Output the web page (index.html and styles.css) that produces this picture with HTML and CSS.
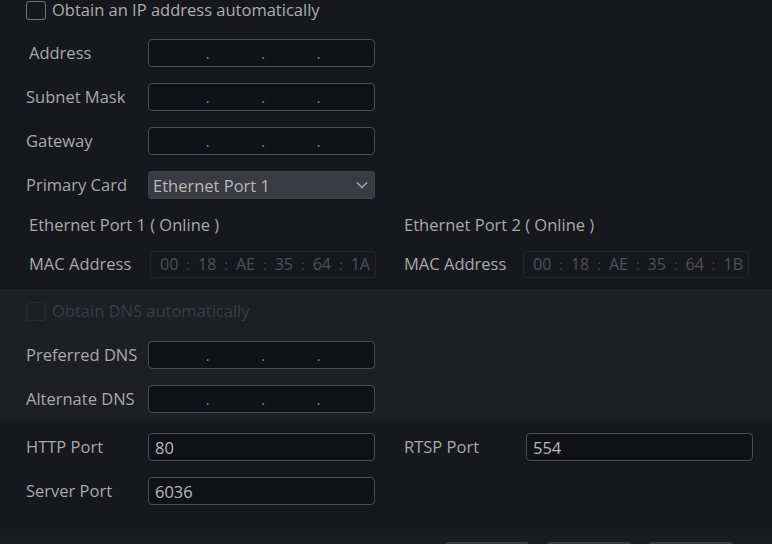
FILE: index.html
```html
<!DOCTYPE html>
<html>
<head>
<meta charset="utf-8">
<link rel="stylesheet" href="styles.css">
</head>
<body>
<div class="page">
  <section class="sec sec-ip">
    <div class="check-row">
      <span class="checkbox"></span>
      <span class="check-label">Obtain an IP address automatically</span>
    </div>
    <div class="row">
      <span class="label indent">Address</span>
      <div class="ipbox"><span></span><span class="dot">.</span><span></span><span class="dot">.</span><span></span><span class="dot">.</span><span></span></div>
    </div>
    <div class="row">
      <span class="label">Subnet Mask</span>
      <div class="ipbox"><span></span><span class="dot">.</span><span></span><span class="dot">.</span><span></span><span class="dot">.</span><span></span></div>
    </div>
    <div class="row">
      <span class="label">Gateway</span>
      <div class="ipbox"><span></span><span class="dot">.</span><span></span><span class="dot">.</span><span></span><span class="dot">.</span><span></span></div>
    </div>
    <div class="row">
      <span class="label">Primary Card</span>
      <div class="select">
        <span>Ethernet Port 1</span>
        <svg class="chev" width="12" height="8" viewBox="0 0 12 8"><polyline points="1,1.5 6,6.5 11,1.5" fill="none" stroke="#a8a8a8" stroke-width="1.5"/></svg>
      </div>
    </div>
    <div class="eth-row">
      <span class="eth-title indent">Ethernet Port 1 ( Online )</span>
      <span class="eth-title">Ethernet Port 2 ( Online )</span>
    </div>
    <div class="mac-row">
      <div class="mac-col">
        <span class="label indent mac-label">MAC Address</span>
        <div class="macbox"><span>00</span><i>:</i><span>18</span><i>:</i><span>AE</span><i>:</i><span>35</span><i>:</i><span>64</span><i>:</i><span>1A</span></div>
      </div>
      <div class="mac-col right">
        <span class="label mac-label">MAC Address</span>
        <div class="macbox"><span>00</span><i>:</i><span>18</span><i>:</i><span>AE</span><i>:</i><span>35</span><i>:</i><span>64</span><i>:</i><span>1B</span></div>
      </div>
    </div>
  </section>
  <section class="sec sec-dns">
    <div class="check-row">
      <span class="checkbox disabled"></span>
      <span class="check-label disabled">Obtain DNS automatically</span>
    </div>
    <div class="row">
      <span class="label">Preferred DNS</span>
      <div class="ipbox"><span></span><span class="dot">.</span><span></span><span class="dot">.</span><span></span><span class="dot">.</span><span></span></div>
    </div>
    <div class="row">
      <span class="label">Alternate DNS</span>
      <div class="ipbox"><span></span><span class="dot">.</span><span></span><span class="dot">.</span><span></span><span class="dot">.</span><span></span></div>
    </div>
  </section>
  <section class="sec sec-port">
    <div class="row two">
      <span class="label">HTTP Port</span>
      <div class="textbox">80</div>
      <span class="label right-label">RTSP Port</span>
      <div class="textbox">554</div>
    </div>
    <div class="row">
      <span class="label">Server Port</span>
      <div class="textbox">6036</div>
    </div>
  </section>
  <footer class="footer">
    <div class="btn"></div>
    <div class="btn"></div>
    <div class="btn"></div>
  </footer>
</div>
</body>
</html>
```

FILE: styles.css
```css
html, body {
  margin: 0;
  padding: 0;
  background: #17181c;
}
body {
  font-family: "Open Sans", "Noto Sans", sans-serif;
  font-size: 16.5px;
  color: #a9a9aa;
}
.page {
  width: 772px;
  height: 544px;
  overflow: hidden;
  background: #17181c;
}
.sec {
  display: flex;
  flex-direction: column;
  padding-left: 26px;
}
.sec-ip {
  height: 289px;
  box-sizing: border-box;
}
.sec-dns {
  background: #1e1f23;
  height: 132px;
  box-sizing: border-box;
  padding-top: 12px;
}
.sec-port {
  height: 114px;
  box-sizing: border-box;
  padding-top: 4px;
}
.check-row {
  display: flex;
  align-items: center;
  height: 20px;
  gap: 6px;
  margin-bottom: 12px;
}
.sec-ip .check-row {
  margin-bottom: 11px;
}
.checkbox {
  width: 20px;
  height: 19px;
  box-sizing: border-box;
  border: 1.5px solid #74767a;
  border-radius: 3px;
}
.checkbox.disabled {
  border: 1.5px dotted #35373b;
}
.check-label {
  color: #acacad;
  line-height: 20px;
}
.check-label.disabled {
  color: #3b3c40;
}
.row {
  display: flex;
  align-items: center;
  height: 44px;
}
.label {
  width: 122px;
  flex: none;
  white-space: nowrap;
  line-height: 20px;
}
.label.indent {
  padding-left: 3px;
  width: 119px;
}
.ipbox, .textbox, .select {
  width: 227px;
  height: 28px;
  box-sizing: border-box;
  border: 1.5px solid #4a4d52;
  border-radius: 4px;
  background: #111216;
  flex: none;
}
.ipbox {
  display: grid;
  grid-template-columns: 1fr 0 1fr 0 1fr 0 1fr;
  align-items: center;
  padding-left: 3px;
}
.ipbox .dot {
  display: flex;
  justify-content: center;
  font-size: 14px;
  color: #8a8b8e;
  line-height: 14px;
  position: relative;
  top: 1px;
}
.select {
  background: #393b40;
  border: 1px solid #3f4146;
  border-radius: 3px;
  display: flex;
  align-items: center;
  justify-content: space-between;
  padding: 0 6px 0 4px;
  color: #b9b9ba;
}
.chev {
  display: block;
}
.eth-row {
  display: flex;
  align-items: center;
  height: 34px;
}
.eth-title {
  width: 378px;
  flex: none;
  box-sizing: border-box;
}
.eth-title.indent {
  padding-left: 3px;
}
.mac-row {
  display: flex;
  align-items: center;
  height: 46px;
}
.mac-col {
  display: flex;
  align-items: center;
  width: 378px;
  flex: none;
}
.mac-col.right {
  width: auto;
}
.mac-col .mac-label {
  width: 121px;
}
.mac-col.right .mac-label {
  width: 119px;
}
.macbox {
  width: 226px;
  height: 27px;
  box-sizing: border-box;
  border: 1px dotted #2e3034;
  border-radius: 3px;
  display: flex;
  align-items: center;
  justify-content: space-between;
  padding: 0 5px 0 9px;
  color: #4e5055;
  font-size: 16px;
}
.macbox i {
  font-style: normal;
  font-size: 14px;
  color: #3f4145;
}
.textbox {
  display: flex;
  align-items: center;
  padding-left: 6px;
  color: #b9b9ba;
}
.right-label {
  margin-left: 29px;
}
.footer {
  height: 120px;
  background: #1a1b1f;
  display: flex;
  gap: 18px;
  padding-left: 445px;
  padding-top: 7px;
  box-sizing: border-box;
}
.btn {
  width: 84px;
  height: 30px;
  background: #3a3b3f;
  border-radius: 3px;
}
```
